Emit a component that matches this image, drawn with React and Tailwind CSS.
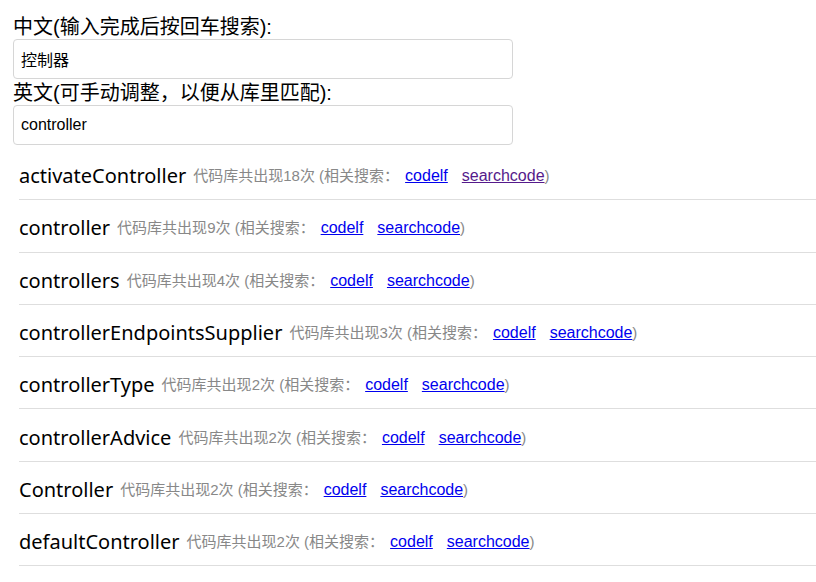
import React from 'react';

const results = [
  { name: 'activateController', count: 18, visited: true },
  { name: 'controller', count: 9 },
  { name: 'controllers', count: 4 },
  { name: 'controllerEndpointsSupplier', count: 3 },
  { name: 'controllerType', count: 2 },
  { name: 'controllerAdvice', count: 2 },
  { name: 'Controller', count: 2 },
  { name: 'defaultController', count: 2 },
];

const cjk = "'Liberation Sans', 'Noto Sans CJK SC', sans-serif";

function ResultRow({ item }){
  return (
    <li className="h-[52.3px] border-b border-[#dedede] flex items-center pt-[5px]">
      <span className="text-[20px] text-black font-['Noto_Sans','Noto_Sans_CJK_SC',sans-serif] leading-none">{item.name}</span>
      <span className="ml-[7px] text-[15px] text-[#888]">
        代码库共出现{item.count}次 (相关搜索：
        <a href="#" className="ml-[6px] text-[16px] underline text-[#0000ee]">codelf</a>
        <a href="#" className={"ml-[14px] text-[16px] underline " + (item.visited ? 'text-[#551a8b]' : 'text-[#0000ee]')}>searchcode</a>
        )
      </span>
    </li>
  );
}

export default function App(){
  return (
    <div className="bg-white w-[816px] h-[582px] overflow-hidden pt-[15px] pl-[13px]" style={{ fontFamily: cjk }}>
      <label className="block text-[20px] leading-[24px] text-black">中文(输入完成后按回车搜索):</label>
      <input
        className="block w-[500px] h-[40px] border border-[#d6d6d6] rounded-[4px] px-[7px] text-[16px] text-black outline-none"
        defaultValue="控制器"
      />
      <label className="block mt-[3px] text-[20px] leading-[23px] text-black">英文(可手动调整，以便从库里匹配):</label>
      <input
        className="block w-[500px] h-[40px] border border-[#d6d6d6] rounded-[4px] px-[7px] text-[16px] text-black outline-none"
        defaultValue="controller"
      />
      <ul className="ml-[6px] mt-[3px]">
        {results.map(r => <ResultRow key={r.name} item={r} />)}
      </ul>
    </div>
  );
}
